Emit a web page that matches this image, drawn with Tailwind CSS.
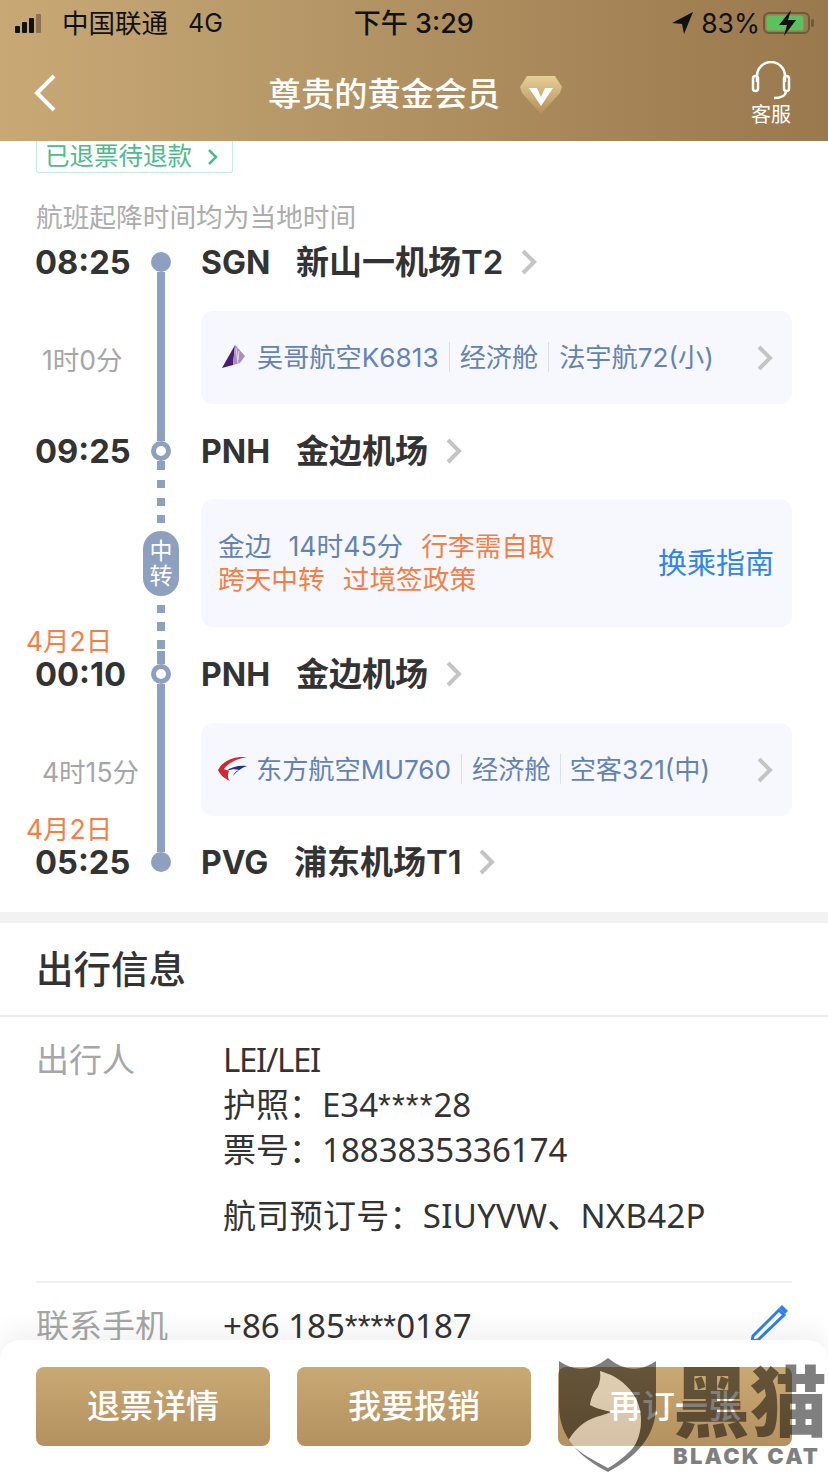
<!DOCTYPE html>
<html lang="zh-CN">
<head>
  <meta charset="UTF-8">
  <meta name="viewport" content="width=device-width, initial-scale=1.0">
  <title>订单详情</title>
  <script src="https://cdn.jsdelivr.net/npm/@tailwindcss/browser@4"></script>
</head>
<body class="bg-white">
  <div class="relative w-[828px] h-[1473px] overflow-hidden bg-white font-['Inter','Noto_Sans_CJK_SC',sans-serif] text-[#333333]">

    <!-- header -->
    <header class="relative z-10 h-[141px] bg-gradient-to-r from-[#c8a976] to-[#99794d]">
      <div class="flex items-center h-[46px] pl-[15px] pr-[13px] text-[#111111]">
        <div class="flex items-end gap-[2px] w-[37px] h-[20px]">
          <span class="w-[5px] h-[7px] rounded-[1px] bg-[#111111]"></span>
          <span class="w-[5px] h-[11px] rounded-[1px] bg-[#111111]"></span>
          <span class="w-[5px] h-[15px] rounded-[1px] bg-[#111111]"></span>
          <span class="w-[5px] h-[19px] rounded-[1px] bg-[#8a7350]"></span>
        </div>
        <span class="ml-[10px] text-[26.500px] leading-none">中国联通</span>
        <span class="ml-[20px] text-[25px] leading-none">4G</span>
        <span class="ml-[131px] w-[116px] text-[27px] leading-none font-medium whitespace-nowrap">下午 3:29</span>
        <svg class="ml-auto" width="21" height="22" viewBox="0 0 21 22"><path d="M21 0 0 11l10 1 2 10z" fill="#111111"/></svg>
        <span class="ml-[8px] text-[26.500px] leading-none">83%</span>
        <svg class="ml-[3px]" width="52" height="26" viewBox="0 0 52 26">
          <rect x="1" y="3" width="45" height="20" rx="5" fill="none" stroke="#6f5a3a" stroke-width="2"/>
          <rect x="3.500" y="5.500" width="37" height="15" rx="2.500" fill="#5cc05f"/>
          <rect x="48" y="9" width="3" height="8" rx="1.500" fill="#6f5a3a"/>
          <path d="M28 0 16 15h8l-3 11 12-16h-8z" fill="#111111"/>
        </svg>
      </div>
      <div class="relative flex items-center justify-between h-[95px] pl-[33px] pr-[37px]">
        <svg width="24" height="38" viewBox="0 0 24 38" fill="none" class="mt-[-1px]"><path d="M21 2 4 19l17 17" stroke="#ffffff" stroke-width="4"/></svg>
        <div class="absolute left-[268px] top-[30px] flex items-center gap-[20px]">
          <span class="text-[33.200px] leading-none font-medium text-white whitespace-nowrap">尊贵的黄金会员</span>
          <svg width="42" height="38" viewBox="0 0 42 38">
            <defs><linearGradient id="gem" x1="0" y1="0" x2="0" y2="1"><stop offset="0" stop-color="#e6cf95"/><stop offset="1" stop-color="#b48f58"/></linearGradient></defs>
            <path d="M7 0h28l7 11-2 6-19 21L2 17l-2-6z" fill="url(#gem)"/>
            <path d="M9 12h8l4 9 4-9h8L21 30z" fill="#ffffff"/>
          </svg>
        </div>
        <div class="flex flex-col items-center w-[40px] mt-[-1px]">
          <svg width="40" height="40" viewBox="0 0 40 40" fill="none" stroke="#ffffff" stroke-width="2.500">
            <path d="M6 21V15a14 14 0 0 1 28 0v6"/>
            <rect x="2" y="15" width="5" height="15" rx="2.500"/>
            <rect x="33" y="15" width="5" height="15" rx="2.500"/>
            <path d="M35 30c0 4-4 7-12 7"/>
          </svg>
          <span class="mt-[4px] text-[20px] leading-none text-white whitespace-nowrap">客服</span>
        </div>
      </div>
    </header>

    <main>
      <!-- status tag -->
      <div class="px-[36px] h-[32px]">
        <div class="flex items-center w-[197px] h-[32px] pl-[8px] border border-t-0 border-[#c6ede0] rounded-b-[3px]">
          <span class="text-[24.500px] leading-none text-[#4dbb8d] whitespace-nowrap">已退票待退款</span>
          <svg class="ml-[15px]" width="12" height="18" viewBox="0 0 12 18" fill="none"><path d="m2 2 7 7-7 7" stroke="#4dbb8d" stroke-width="2.500"/></svg>
        </div>
      </div>
      <p class="mt-[31px] pl-[36px] h-[27px] text-[26.700px] leading-[27px] text-[#adadad] whitespace-nowrap">航班起降时间均为当地时间</p>

      <!-- timeline -->
      <section class="mt-[8px] pl-[36px] pr-[36px]">

        <div class="flex h-[46px] items-center">
          <div class="w-[107px] ml-[-1px] mr-[1px] pt-[1px] text-[32.700px] leading-none font-bold">08:25</div>
          <div class="flex flex-col items-center w-[36px] h-full">
            <span class="h-[13px]"></span>
            <span class="w-[20px] h-[20px] rounded-full bg-[#8da0c0]"></span>
            <span class="w-[8px] flex-1 bg-[#8da0c0]"></span>
          </div>
          <div class="flex items-center ml-[22px]">
            <span class="w-[95px] pt-[1px] text-[32px] leading-none font-bold">SGN</span>
            <span class="text-[33px] leading-none font-semibold">新山一机场T2</span>
            <svg class="ml-[17px]" width="18" height="26" viewBox="0 0 18 26" fill="none"><path d="m3 2 11 11L3 24" stroke="#c4c4c4" stroke-width="4"/></svg>
          </div>
        </div>

        <div class="flex h-[143px]">
          <div class="flex items-center w-[107px] pl-[6px] pt-[9px] text-[26.500px] text-[#a6a6a6] whitespace-nowrap">1时0分</div>
          <div class="flex justify-center w-[36px]"><span class="w-[8px] h-full bg-[#8da0c0]"></span></div>
          <div class="flex items-center justify-between flex-1 ml-[22px] mt-[26px] h-[93px] pl-[20px] pr-[18px] rounded-[12px] bg-[#f6f8fd] text-[26.200px] text-[#6583b2]">
            <div class="flex items-center whitespace-nowrap">
              <svg width="24" height="26" viewBox="0 0 24 26"><path d="M14 1 1 24l11-3z" fill="#4b1d72"/><path d="M14 1l10 11-5 7-7 2z" fill="#a98fbd"/><path d="M15 4l2 15M18 7l-1 9" stroke="#e6dcee" stroke-width="1"/></svg>
              <span class="ml-[12px]">吴哥航空K6813</span>
              <span class="mx-[10px] w-px h-[30px] bg-[#d8deea]"></span>
              <span>经济舱</span>
              <span class="mx-[10px] w-px h-[30px] bg-[#d8deea]"></span>
              <span>法宇航72(小)</span>
            </div>
            <svg width="18" height="26" viewBox="0 0 18 26" fill="none"><path d="m3 2 11 11L3 24" stroke="#c4c4c4" stroke-width="4"/></svg>
          </div>
        </div>

        <div class="flex h-[46px] items-center">
          <div class="w-[107px] ml-[-1px] mr-[1px] pt-[1px] text-[32.700px] leading-none font-bold">09:25</div>
          <div class="flex flex-col items-center w-[36px] h-full">
            <span class="w-[8px] h-[13px] bg-[#8da0c0]"></span>
            <span class="w-[20px] h-[20px] rounded-full border-[5px] border-[#8da0c0] bg-white"></span>
            <span class="w-[8px] h-[9px] bg-[#8da0c0]"></span>
          </div>
          <div class="flex items-center ml-[22px]">
            <span class="w-[95px] pt-[1px] text-[32px] leading-none font-bold">PNH</span>
            <span class="text-[33px] leading-none font-semibold">金边机场</span>
            <svg class="ml-[17px]" width="18" height="26" viewBox="0 0 18 26" fill="none"><path d="m3 2 11 11L3 24" stroke="#c4c4c4" stroke-width="4"/></svg>
          </div>
        </div>

        <div class="flex h-[177px]">
          <div class="flex flex-col justify-end w-[107px]">
            <span class="ml-[-10px] text-[26.500px] leading-[20px] text-[#f47f45] whitespace-nowrap">4月2日</span>
          </div>
          <div class="flex flex-col items-center w-[36px]">
            <span class="w-[8px] h-[8px] mt-[6px] bg-[#8da0c0]"></span>
            <span class="w-[8px] h-[8px] mt-[10px] bg-[#8da0c0]"></span>
            <span class="w-[8px] h-[8px] mt-[9px] bg-[#8da0c0]"></span>
            <span class="flex flex-col items-center justify-center w-[36px] h-[65px] mt-[8px] rounded-[18px] bg-[#8da0c0] text-[23px] leading-[25px] text-white">中<br>转</span>
            <span class="w-[8px] h-[8px] mt-[9px] bg-[#8da0c0]"></span>
            <span class="w-[8px] h-[9px] mt-[9px] bg-[#8da0c0]"></span>
            <span class="w-[8px] h-[9px] mt-[9px] bg-[#8da0c0]"></span>
          </div>
          <div class="flex items-center justify-between flex-1 ml-[22px] mt-[25px] h-[128px] pl-[17px] pr-[18px] rounded-[12px] bg-[#f6f8fd] text-[26.700px] leading-[33px]">
            <div class="whitespace-nowrap">
              <div class="flex"><span class="text-[#6583b2]">金边</span><span class="ml-[17px] text-[#6583b2]">14时45分</span><span class="ml-[18px] text-[#f47f45]">行李需自取</span></div>
              <div class="flex gap-[18px] text-[#f47f45]"><span>跨天中转</span><span>过境签政策</span></div>
            </div>
            <span class="text-[29px] text-[#2f86e8] whitespace-nowrap">换乘指南</span>
          </div>
        </div>

        <div class="flex h-[46px] items-center">
          <div class="w-[107px] ml-[-1px] mr-[1px] pt-[1px] text-[32.700px] leading-none font-bold">00:10</div>
          <div class="flex flex-col items-center w-[36px] h-full">
            <span class="w-[8px] h-[13px] bg-[#8da0c0]"></span>
            <span class="w-[20px] h-[20px] rounded-full border-[5px] border-[#8da0c0] bg-white"></span>
            <span class="w-[8px] flex-1 bg-[#8da0c0]"></span>
          </div>
          <div class="flex items-center ml-[22px]">
            <span class="w-[95px] pt-[1px] text-[32px] leading-none font-bold">PNH</span>
            <span class="text-[33px] leading-none font-semibold">金边机场</span>
            <svg class="ml-[17px]" width="18" height="26" viewBox="0 0 18 26" fill="none"><path d="m3 2 11 11L3 24" stroke="#c4c4c4" stroke-width="4"/></svg>
          </div>
        </div>

        <div class="flex h-[142px]">
          <div class="flex flex-col w-[107px]">
            <span class="pl-[6px] mt-[58px] text-[26.500px] leading-[34px] text-[#a6a6a6] whitespace-nowrap">4时15分</span>
            <span class="ml-[-10px] mt-auto text-[26.500px] leading-[20px] text-[#f47f45] whitespace-nowrap">4月2日</span>
          </div>
          <div class="flex justify-center w-[36px]"><span class="w-[8px] h-full bg-[#8da0c0]"></span></div>
          <div class="flex items-center justify-between flex-1 ml-[22px] mt-[26px] h-[93px] pl-[17px] pr-[18px] rounded-[12px] bg-[#f6f8fd] text-[26.200px] text-[#6583b2]">
            <div class="flex items-center whitespace-nowrap">
              <svg width="29" height="25" viewBox="0 0 29 25"><path d="M29 0C17-1 5 3 0 13c2 4 5 8 12 11-2-2-3-6-1-10C8 13 6 12 6 12 10 6 18 2 29 0z" fill="#d6262b"/><path d="M29 9C21 8 13 10 8 14c6-2 10-2 13-1-3 1-5 3-6 6 3-4 8-8 14-10z" fill="#1f2f8f"/></svg>
              <span class="ml-[9px]">东方航空MU760</span>
              <span class="mx-[10px] w-px h-[30px] bg-[#d8deea]"></span>
              <span>经济舱</span>
              <span class="mx-[9px] w-px h-[30px] bg-[#d8deea]"></span>
              <span>空客321(中)</span>
            </div>
            <svg width="18" height="26" viewBox="0 0 18 26" fill="none"><path d="m3 2 11 11L3 24" stroke="#c4c4c4" stroke-width="4"/></svg>
          </div>
        </div>

        <div class="flex h-[46px] items-center">
          <div class="w-[107px] ml-[-1px] mr-[1px] pt-[1px] text-[32.700px] leading-none font-bold">05:25</div>
          <div class="flex flex-col items-center w-[36px] h-full">
            <span class="w-[8px] h-[13px] bg-[#8da0c0]"></span>
            <span class="w-[20px] h-[20px] rounded-full bg-[#8da0c0]"></span>
          </div>
          <div class="flex items-center ml-[22px]">
            <span class="w-[93px] pt-[1px] text-[32px] leading-none font-bold">PVG</span>
            <span class="text-[33px] leading-none font-semibold">浦东机场T1</span>
            <svg class="ml-[16px]" width="18" height="26" viewBox="0 0 18 26" fill="none"><path d="m3 2 11 11L3 24" stroke="#c4c4c4" stroke-width="4"/></svg>
          </div>
        </div>
      </section>

      <div class="mt-[27px] h-[11px] bg-[#f2f2f2]"></div>

      <!-- traveller info -->
      <h2 class="flex items-center h-[94px] pl-[36px] pt-[2px] text-[37.500px] font-medium border-b-2 border-[#ececec]">出行信息</h2>
      <div class="mx-[36px] h-[266px] border-b-2 border-[#f0f0f0] flex font-['Noto_Sans','Noto_Sans_CJK_SC',sans-serif]">
        <span class="w-[187px] pl-[-1px] pt-[23px] text-[33px] leading-[36px] text-[#a6a6a6] font-['Noto_Sans_CJK_SC',sans-serif]">出行人</span>
        <div class="pt-[21px] text-[33px] leading-[44.500px] whitespace-nowrap">
          <div class="tracking-[-1.300px]">LEI/LEI</div>
          <div>护照：E34<span class="font-['Liberation_Sans'] tracking-[1px]">****</span>28</div>
          <div>票号：1883835336174</div>
          <div class="mt-[21px] tracking-[0.300px]">航司预订号：SIUYVW、NXB42P</div>
        </div>
      </div>
      <div class="mx-[36px] flex items-center h-[86px] font-['Noto_Sans','Noto_Sans_CJK_SC',sans-serif]">
        <span class="w-[187px] text-[33px] text-[#a6a6a6]">联系手机</span>
        <span class="text-[33px] whitespace-nowrap">+86 185<span class="font-['Liberation_Sans']">****</span>0187</span>
      </div>
    </main>

    <!-- edit pencil, cut by the bottom bar -->
    <svg class="absolute left-[751px] top-[1305px]" width="38" height="36" viewBox="0 0 38 36" fill="none">
      <path d="M28 5 2 31l-1 5 6-1L33 10z" stroke="#2f80ed" stroke-width="3"/>
      <path d="m31 0 6 6-3 3-6-6z" fill="#2f80ed"/>
    </svg>

    <!-- bottom actions -->
    <div class="absolute left-0 right-0 bottom-0 h-[133px] rounded-t-[20px] bg-white shadow-[0_-12px_24px_rgba(0,0,0,0.05)] flex justify-between pt-[27px] px-[36px]">
      <button class="w-[234px] h-[79px] rounded-[8px] bg-gradient-to-b from-[#c9a974] to-[#b4915f] text-[33px] font-medium text-white">退票详情</button>
      <button class="w-[234px] h-[79px] rounded-[8px] bg-gradient-to-b from-[#c9a974] to-[#b4915f] text-[33px] font-medium text-white">我要报销</button>
      <button class="w-[234px] h-[79px] rounded-[8px] bg-gradient-to-b from-[#c9a974] to-[#b4915f] text-[33px] font-medium text-white">再订一张</button>
    </div>

    <!-- watermark -->
    <svg class="absolute left-[559px] top-[1358px] z-20" width="98" height="115" viewBox="0 0 98 115">
      <path fill-rule="evenodd" d="M0 3Q24 20 49 0 73 20 97 3V48C97 80 75 100 49 114 22 100 0 80 0 48ZM41 13 52 17C70 26 82 42 82 62 82 78 76 88 72 92 64 100 56 106 49 110 36 103 20 95 9 83 14 74 22 66 30 62 38 58 46 57 52 54 46 52 38 51 31 47 32 40 35 33 39 29 41 24 42 18 41 13Z" fill="#000000" fill-opacity="0.5"/>
      <path d="M41 13 52 17C70 26 82 42 82 62 82 78 76 88 72 92 64 100 56 106 49 110 36 103 20 95 9 83 14 74 22 66 30 62 38 58 46 57 52 54 46 52 38 51 31 47 32 40 35 33 39 29 41 24 42 18 41 13Z" fill="#ffffff" fill-opacity="0.45"/>
    </svg>
    <div class="absolute left-[673px] top-[1361px] z-20 flex flex-col items-start text-black/50">
      <span class="text-[77px] leading-[84px] font-black whitespace-nowrap">黑猫</span>
      <span class="text-[22px] leading-[22px] font-black tracking-[2.200px] whitespace-nowrap">BLACK CAT</span>
    </div>
  </div>
</body>
</html>
